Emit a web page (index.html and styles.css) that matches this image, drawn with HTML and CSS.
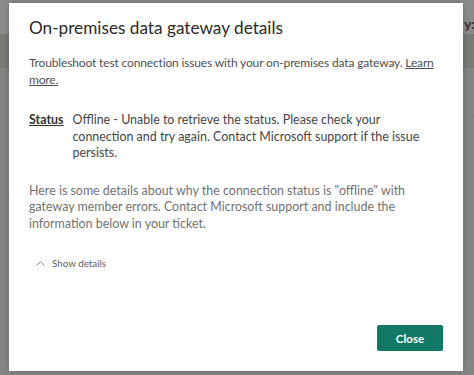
FILE: index.html
```html
<!DOCTYPE html>
<html>
<head>
  <meta charset="UTF-8" />
  <title>On-premises data gateway details</title>
  <link rel="stylesheet" href="styles.css">
</head>
<body>
  <div class="backdrop">
    <div class="page-header"><span class="page-text">y:</span></div>
    <div class="page-band"></div>
    <div class="page-rule"></div>
  </div>

  <div class="dialog" role="dialog">
    <h1 class="title">On-premises data gateway details</h1>

    <p class="intro">
      Troubleshoot test connection issues with your on-premises data gateway.
      <a href="#">Learn more.</a>
    </p>

    <div class="status">
      <span class="status-label">Status</span>
      <span class="status-text">Offline - Unable to retrieve the status. Please check your connection and try again. Contact Microsoft support if the issue persists.</span>
    </div>

    <p class="details">
      Here is some details about why the connection status is "offline" with
      gateway member errors. Contact Microsoft support and include the
      information below in your ticket.
    </p>

    <button class="toggle">
      <svg class="chevron" width="9" height="5" viewBox="0 0 9 5">
        <path d="M0.5 4.5 L4.5 0.8 L8.5 4.5" fill="none" stroke="#8a8886" stroke-width="1" />
      </svg>
      Show details
    </button>

    <div class="footer">
      <button class="close">Close</button>
    </div>
  </div>
</body>
</html>
```

FILE: styles.css
```css
* {
  box-sizing: border-box;
}

body {
  margin: 0;
  width: 474px;
  height: 375px;
  overflow: hidden;
  background: #858585;
  font-family: Lato, "Noto Sans", sans-serif;
  position: relative;
}

.backdrop {
  position: absolute;
  inset: 0;
}

.page-header {
  height: 34px;
  background: #8b8b8b;
  display: flex;
  justify-content: flex-end;
  align-items: flex-end;
}

.page-text {
  color: #333;
  font-size: 14px;
  font-weight: 700;
  line-height: 18px;
  margin-bottom: 1px;
  margin-right: -1px;
}

.page-band {
  height: 34px;
  background: #7b7a77;
}

.page-rule {
  margin-top: 47px;
  height: 1px;
  background: #7d7d7d;
}

.dialog {
  position: absolute;
  left: 9px;
  top: 3px;
  width: 454px;
  height: 368px;
  background: #fff;
  box-shadow: 0 0 6px rgba(0, 0, 0, 0.25);
  padding: 12px 20px 20px 20px;
  display: flex;
  flex-direction: column;
}

.title {
  margin: 0;
  font-size: 17.2px;
  font-weight: 400;
  color: #2b2a29;
  line-height: 26px;
}

.intro {
  margin: 14px 0 0;
  font-size: 12px;
  letter-spacing: -0.15px;
  line-height: 16.5px;
  color: #505050;
}

.intro a {
  color: #505050;
}

.status {
  display: flex;
  gap: 9px;
  margin-top: 24px;
  font-size: 12.45px;
  line-height: 16.5px;
  color: #454545;
}

.status-label {
  font-weight: 700;
  color: #333;
  text-decoration: underline;
  flex: none;
}

.details {
  margin: 21px 0 0;
  font-size: 12.45px;
  line-height: 16.5px;
  color: #727272;
}

.toggle {
  margin-top: 25px;
  align-self: flex-start;
  border: 0;
  background: none;
  padding: 0 0 0 7px;
  font-family: inherit;
  font-size: 9.8px;
  color: #605e5c;
  display: flex;
  align-items: center;
  gap: 7px;
}

.footer {
  margin-top: auto;
  display: flex;
  justify-content: flex-end;
}

.close {
  width: 66px;
  height: 26px;
  border: 0;
  border-radius: 2px;
  background: #117865;
  color: #fff;
  font-family: inherit;
  font-size: 11.5px;
  font-weight: 700;
}
```
